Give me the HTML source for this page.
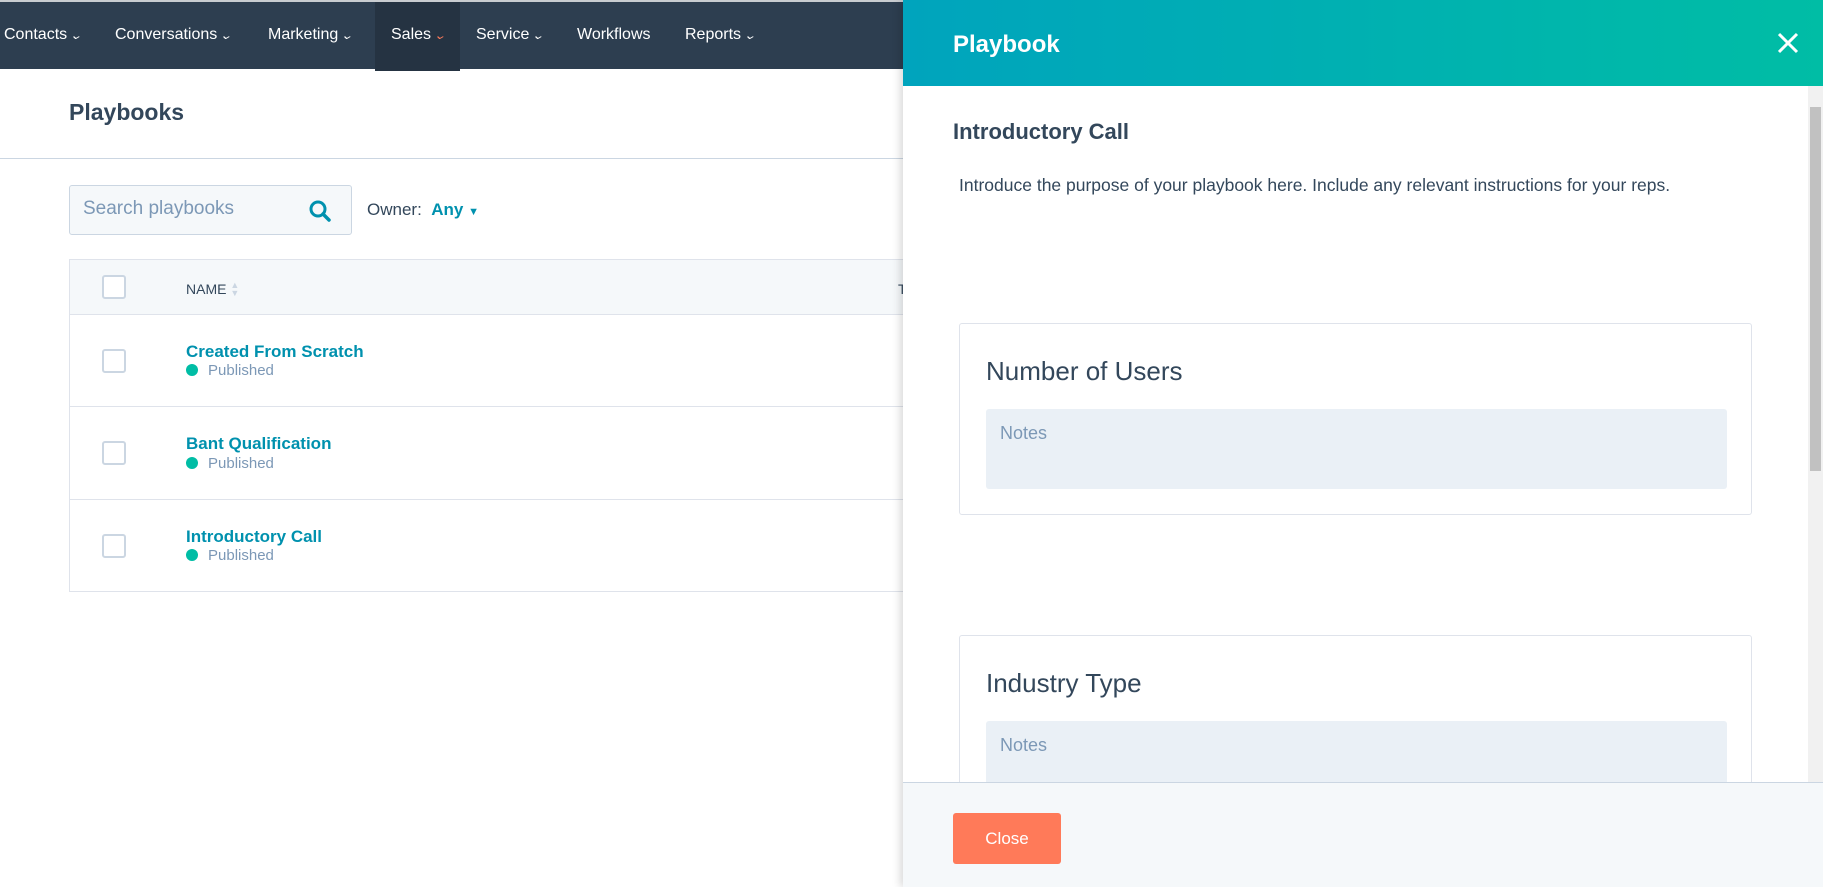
<!DOCTYPE html>
<html><head><meta charset="utf-8"><style>
*{box-sizing:border-box;margin:0;padding:0}
body{width:1823px;height:887px;overflow:hidden;background:#fff;font-family:"Liberation Sans",sans-serif;color:#33475b;position:relative}
.nav{position:absolute;left:0;top:0;width:1823px;height:69px;background:#2d3e50;border-top:2px solid #c8ccd0}
.nav span{position:absolute;top:24px;color:#fff;font-size:16px}
.nav .ch{font-size:11px;margin-left:4px;display:inline-block;transform:scaleX(1.4)}
.act{position:absolute;left:375px;top:0;width:85px;height:69px;background:#253342}
.abs{position:absolute}
.cb{position:absolute;left:102px;width:24px;height:24px;border:2px solid #cbd6e2;border-radius:3px;background:#fff}
.link{position:absolute;left:186px;color:#0091ae;font-size:17px;font-weight:bold}
.pub{position:absolute;left:186px;color:#7c98b6;font-size:15px}
.pub:before{content:"";display:inline-block;width:12px;height:12px;border-radius:50%;background:#00bda5;margin-right:10px;vertical-align:-1px}
.row{position:absolute;left:69px;width:840px;border-bottom:1px solid #dfe3eb}
.panel{position:absolute;left:903px;top:0;width:920px;height:887px;background:#fff;box-shadow:-3px 0 8px rgba(0,0,0,.15)}
.card{position:absolute;left:56px;width:793px;border:1px solid #dfe3eb;border-radius:3px;background:#fff}
.card h2{position:absolute;left:26px;font-weight:normal;font-size:26px;color:#33475b}
.notes{position:absolute;left:26px;width:741px;background:#eaf0f6;border-radius:3px;color:#7c98b6;font-size:18px;padding:14px 14px}
</style></head><body>
<div class="nav">
<div class="act"></div>
<span style="left:4px">Contacts<i class="ch">⌄</i></span>
<span style="left:115px">Conversations<i class="ch">⌄</i></span>
<span style="left:268px">Marketing<i class="ch">⌄</i></span>
<span style="left:391px">Sales<i class="ch" style="color:#ff7a59">⌄</i></span>
<span style="left:476px">Service<i class="ch">⌄</i></span>
<span style="left:577px">Workflows</span>
<span style="left:685px">Reports<i class="ch">⌄</i></span>
</div>
<div class="abs" style="left:69px;top:99px;font-size:23px;font-weight:bold;color:#33475b">Playbooks</div>
<div class="abs" style="left:0;top:158px;width:903px;border-top:1px solid #cbd6e2"></div>
<div class="abs" style="left:69px;top:185px;width:283px;height:50px;background:#f5f8fa;border:1px solid #cbd6e2;border-radius:3px;color:#7c98b6;font-size:19px;padding:12px 13px">Search playbooks
<svg class="abs" style="left:238px;top:13px" width="24" height="24" viewBox="0 0 24 24"><circle cx="10" cy="10" r="7" fill="none" stroke="#0091ae" stroke-width="3"/><path d="M15 15l6 6" stroke="#0091ae" stroke-width="3.5" stroke-linecap="round"/></svg></div>
<div class="abs" style="left:367px;top:200px;font-size:17px;color:#33475b">Owner:&nbsp; <b style="color:#0091ae">Any</b> <span style="color:#0091ae;font-size:11px">▼</span></div>
<div class="abs" style="left:69px;top:259px;width:840px;height:56px;background:#f5f8fa;border:1px solid #dfe3eb"></div>
<div class="cb" style="top:275px"></div>
<div class="abs" style="left:186px;top:281px;font-size:14px;color:#33475b">NAME <span style="color:#cbd6e2;font-size:9px;display:inline-block;line-height:8px;vertical-align:-2px">▲<br>▼</span></div>
<div class="abs" style="left:898px;top:281px;font-size:14px">T</div>
<div class="abs" style="left:69px;top:315px;height:277px;border-left:1px solid #dfe3eb"></div>
<div class="row" style="top:315px;height:92px"></div>
<div class="row" style="top:407px;height:93px"></div>
<div class="row" style="top:500px;height:92px"></div>
<div class="cb" style="top:349px"></div><div class="link" style="top:342px">Created From Scratch</div><div class="pub" style="top:362px">Published</div>
<div class="cb" style="top:441px"></div><div class="link" style="top:434px">Bant Qualification</div><div class="pub" style="top:455px">Published</div>
<div class="cb" style="top:534px"></div><div class="link" style="top:527px">Introductory Call</div><div class="pub" style="top:547px">Published</div>

<div class="panel">
<div class="abs" style="left:0;top:0;width:920px;height:86px;background:linear-gradient(90deg,#00a4bd,#00bda5)"></div>
<div class="abs" style="left:50px;top:31px;color:#fff;font-size:24px;font-weight:bold">Playbook</div>
<svg class="abs" style="left:874px;top:32px" width="22" height="22" viewBox="0 0 22 22"><path d="M2 2L20 20M20 2L2 20" stroke="#fff" stroke-width="3"/></svg>
<div class="abs" style="left:905px;top:86px;width:15px;height:696px;background:#f1f1f1"></div>
<div class="abs" style="left:907px;top:107px;width:11px;height:364px;background:#c1c1c1"></div>
<div class="abs" style="left:50px;top:119px;font-size:22px;font-weight:bold;color:#33475b">Introductory Call</div>
<div class="abs" style="left:56px;top:175px;font-size:17.5px;color:#33475b">Introduce the purpose of your playbook here. Include any relevant instructions for your reps.</div>
<div class="card" style="top:323px;height:192px"><h2 style="top:32px">Number of Users</h2><div class="notes" style="top:85px;height:80px">Notes</div></div>
<div class="card" style="top:635px;height:160px"><h2 style="top:32px">Industry Type</h2><div class="notes" style="top:85px;height:80px">Notes</div></div>
<div class="abs" style="left:0;top:782px;width:920px;height:105px;background:#f5f8fa;border-top:1px solid #cbd6e2"></div>
<div class="abs" style="left:50px;top:813px;width:108px;height:51px;background:#ff7a59;border-radius:3px;color:#fff;font-size:17px;text-align:center;line-height:51px">Close</div>
</div>
</body></html>
